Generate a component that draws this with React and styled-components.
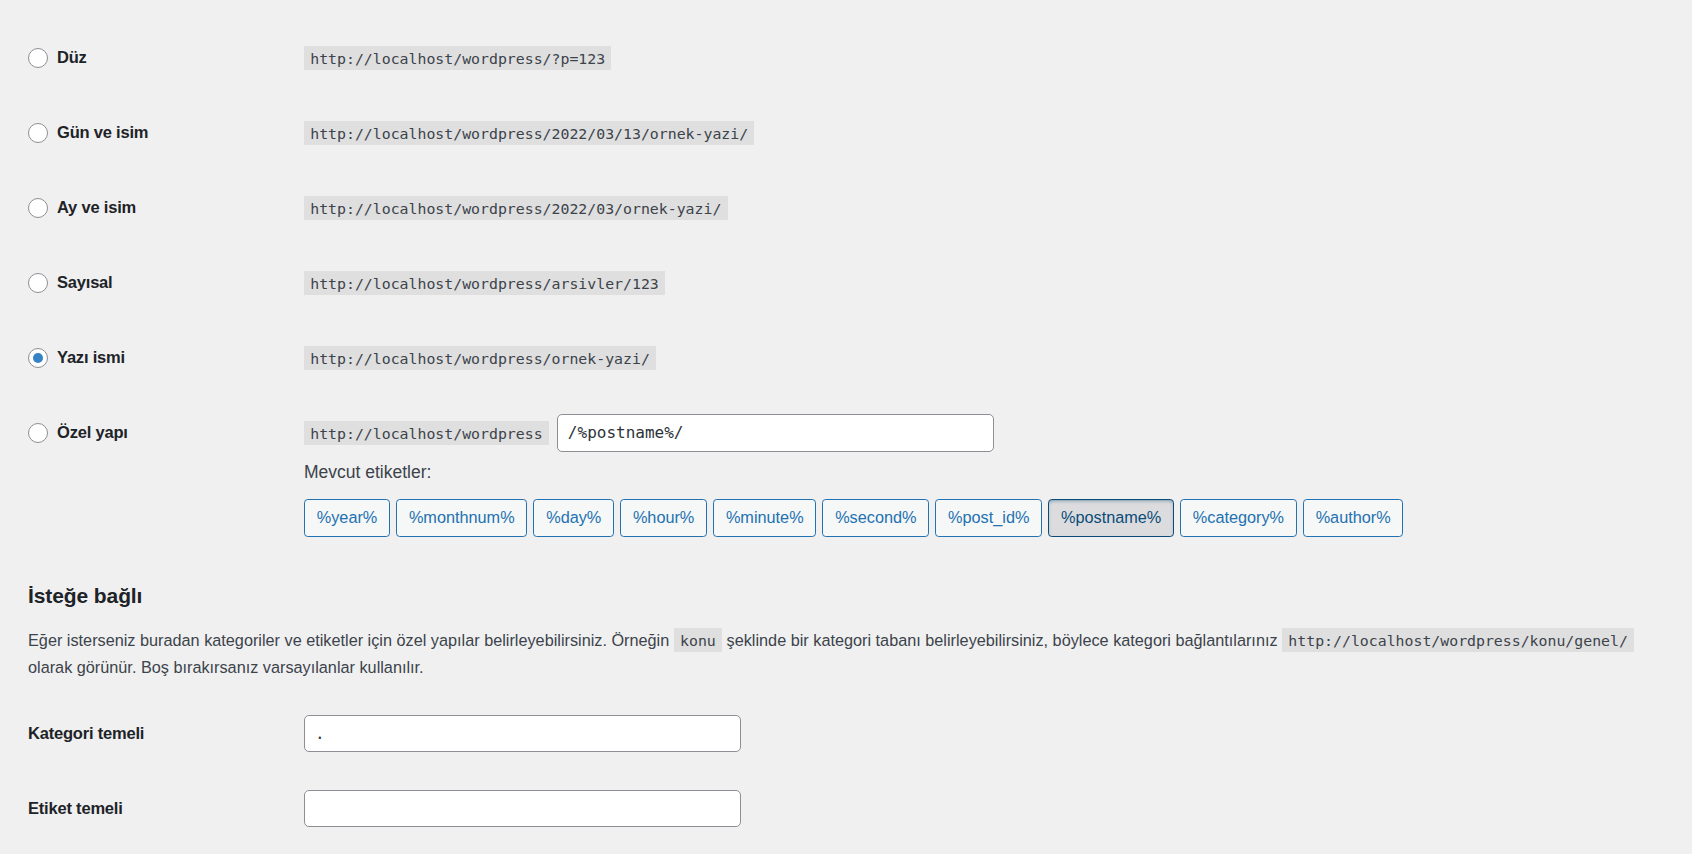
import React from 'react';
import styled, { createGlobalStyle } from 'styled-components';

const structures = [
    { label: 'Düz', code: 'http://localhost/wordpress/?p=123' },
    { label: 'Gün ve isim', code: 'http://localhost/wordpress/2022/03/13/ornek-yazi/' },
    { label: 'Ay ve isim', code: 'http://localhost/wordpress/2022/03/ornek-yazi/' },
    { label: 'Sayısal', code: 'http://localhost/wordpress/arsivler/123' },
    { label: 'Yazı ismi', code: 'http://localhost/wordpress/ornek-yazi/', checked: true },
];

const tags = ['%year%', '%monthnum%', '%day%', '%hour%', '%minute%', '%second%', '%post_id%', '%postname%', '%category%', '%author%'];

function App() {
    return (
        <>
            <GlobalStyle />
            <Page>
                <SectionTitle $clipped>Ortak ayarlar</SectionTitle>

                {structures.map((s) => (
                    <Row key={s.label}>
                        <HeadCell>
                            <RadioLabel>
                                <Radio type="radio" name="selection" defaultChecked={!!s.checked} />
                                {s.label}
                            </RadioLabel>
                        </HeadCell>
                        <DataCell>
                            <Code>{s.code}</Code>
                        </DataCell>
                    </Row>
                ))}

                <Row>
                    <HeadCell>
                        <RadioLabel>
                            <Radio type="radio" name="selection" />
                            Özel yapı
                        </RadioLabel>
                    </HeadCell>
                    <DataCell>
                        <CustomLine>
                            <Code>http://localhost/wordpress</Code>
                            <TextInput type="text" defaultValue="/%postname%/" />
                        </CustomLine>
                        <Legend>Mevcut etiketler:</Legend>
                        <TagList>
                            {tags.map((t) => (
                                <TagButton key={t} $active={t === '%postname%'}>{t}</TagButton>
                            ))}
                        </TagList>
                    </DataCell>
                </Row>

                <SectionTitle>İsteğe bağlı</SectionTitle>
                <Description>
                    Eğer isterseniz buradan kategoriler ve etiketler için özel yapılar belirleyebilirsiniz. Örneğin <Code>konu</Code> şeklinde bir kategori tabanı belirleyebilirsiniz, böylece kategori bağlantılarınız <Code>http://localhost/wordpress/konu/genel/</Code> olarak görünür. Boş bırakırsanız varsayılanlar kullanılır.
                </Description>

                <Row>
                    <HeadCell>
                        <FieldLabel htmlFor="category_base">Kategori temeli</FieldLabel>
                    </HeadCell>
                    <DataCell>
                        <TextInput id="category_base" type="text" defaultValue="." />
                    </DataCell>
                </Row>
                <Row>
                    <HeadCell>
                        <FieldLabel htmlFor="tag_base">Etiket temeli</FieldLabel>
                    </HeadCell>
                    <DataCell>
                        <TextInput id="tag_base" type="text" defaultValue="" />
                    </DataCell>
                </Row>
            </Page>
        </>
    )
}

export default App;

const GlobalStyle = createGlobalStyle`
    html, body {
        margin: 0;
        background: #f0f0f1;
        min-height: 100%;
    }
    body {
        font-family: "Liberation Sans", Arial, sans-serif;
        font-size: 17.5px;
        color: #3c434a;
        overflow: hidden;
    }
`;

const Page = styled.div`
    padding: 0 20px 0 28px;
    min-height: 854px;
    box-sizing: border-box;
`;

const SectionTitle = styled.h2`
    font-size: 21px;
    font-weight: 600;
    line-height: 29.6px;
    color: #1d2327;
    margin: ${p => p.$clipped ? '-27px 0 17.9px' : '26px 0 15.7px'};
    letter-spacing: -0.1px;
`;

const Row = styled.div`
    display: grid;
    grid-template-columns: 276px 1fr;
    align-items: start;
`;

const HeadCell = styled.div`
    height: 75px;
    display: flex;
    align-items: center;
`;

const DataCell = styled.div`
    padding: 18.75px 0;
    min-height: 37.5px;
    display: flex;
    flex-direction: column;
    justify-content: center;
    align-items: flex-start;
`;

const labelText = `
    font-size: 16.5px;
    font-weight: 600;
    letter-spacing: -0.2px;
    color: #1d2327;
`;

const RadioLabel = styled.label`
    display: flex;
    align-items: center;
    gap: 9px;
    cursor: pointer;
    ${labelText}
`;

const FieldLabel = styled.label`
    ${labelText}
`;

const Radio = styled.input`
    appearance: none;
    margin: 0;
    width: 20px;
    height: 20px;
    border: 1px solid #8c8f94;
    border-radius: 50%;
    background: #fff;
    box-sizing: border-box;
    display: grid;
    place-items: center;
    cursor: pointer;

    &:checked::before {
        content: "";
        width: 10px;
        height: 10px;
        border-radius: 50%;
        background: #3582c4;
    }
`;

const Code = styled.code`
    display: inline-block;
    font-family: "DejaVu Sans Mono", "Liberation Mono", monospace;
    font-size: 14.85px;
    line-height: 18px;
    letter-spacing: 0;
    padding: 3.75px 6.25px 2.5px;
    background: rgba(0, 0, 0, 0.07);
    color: #3c434a;
`;

const CustomLine = styled.div`
    display: flex;
    align-items: center;
    gap: 8px;
`;

const TextInput = styled.input`
    width: 437px;
    height: 37.5px;
    box-sizing: border-box;
    padding: 0 10px;
    border: 1px solid #8c8f94;
    border-radius: 5px;
    background: #fff;
    font-family: "DejaVu Sans Mono", "Liberation Mono", monospace;
    font-size: 16px;
    color: #2c3338;
    outline: none;
`;

const Legend = styled.div`
    margin-top: 7px;
    line-height: 26.25px;
    color: #3c434a;
`;

const TagList = styled.ul`
    list-style: none;
    margin: 14.25px 0 0;
    padding: 0;
    display: flex;
    flex-wrap: wrap;
    gap: 6px;
`;

const TagButton = styled.li`
    box-sizing: border-box;
    height: 37.5px;
    padding: 0 11.8px;
    display: flex;
    align-items: center;
    border: 1px solid ${p => p.$active ? '#0a4b78' : '#2271b1'};
    border-radius: 3.75px;
    background: ${p => p.$active ? '#dcdcde' : '#f6f7f7'};
    color: ${p => p.$active ? '#0a4b78' : '#2271b1'};
    box-shadow: ${p => p.$active ? 'inset 0 2px 5px -3px #0a4b78' : 'none'};
    font-size: 16.25px;
    cursor: pointer;
`;

const Description = styled.p`
    margin: 0 0 15px;
    font-size: 16.25px;
    line-height: 27px;
    color: #3c434a;
`;
